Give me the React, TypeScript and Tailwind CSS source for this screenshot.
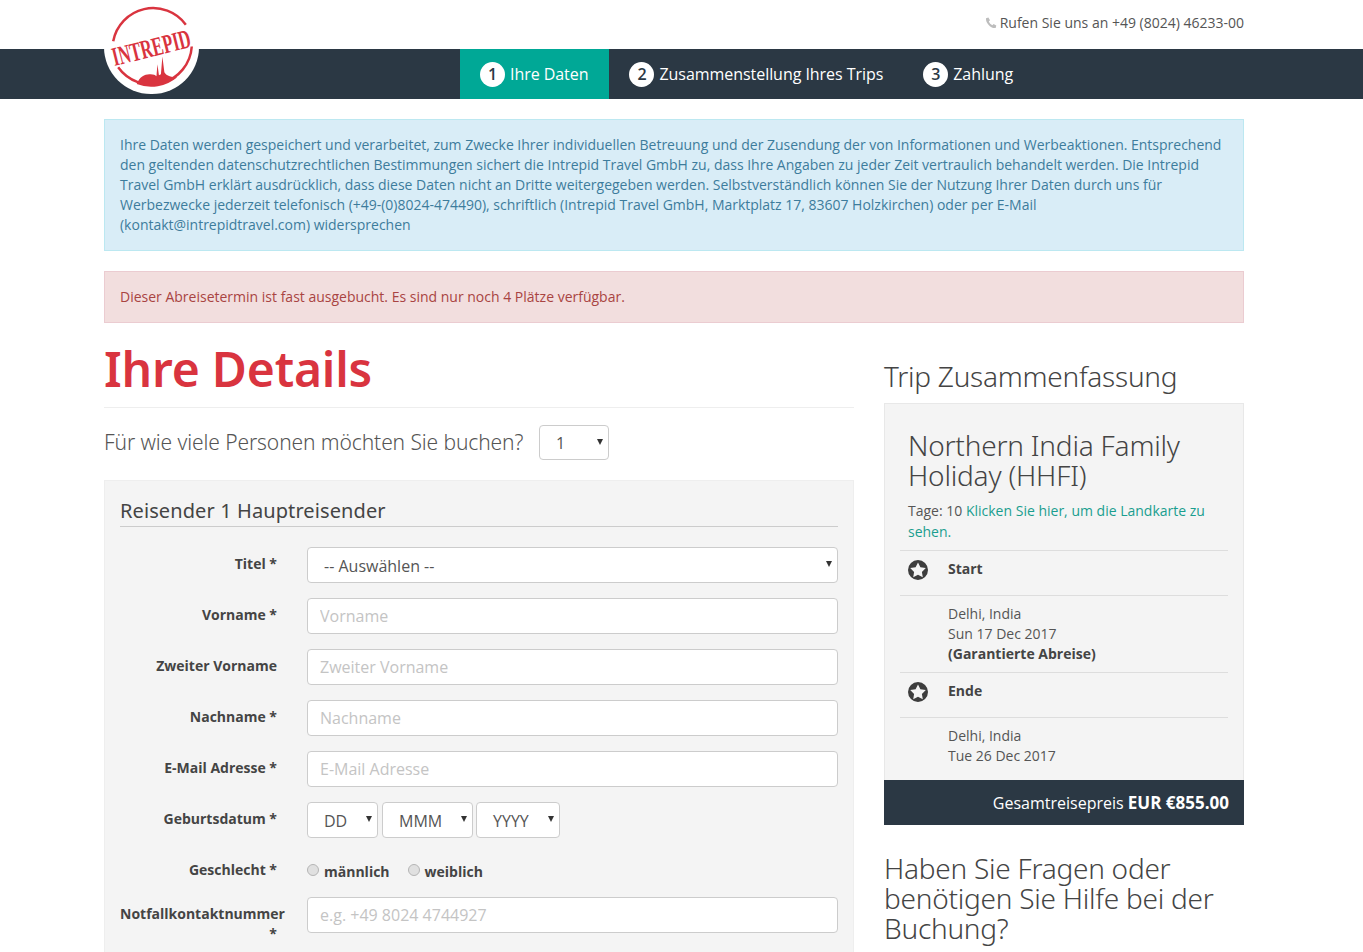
import React from "react";

const sans = "font-['Open_Sans','Noto_Sans',sans-serif]";
const head = "font-['Noto_Sans','Open_Sans',sans-serif]";

function Logo() {
  return (
    <div className="absolute left-0 top-0 w-[95px] h-[94px] rounded-full bg-white z-10">
      <svg viewBox="0 0 96 95" className="w-full h-full">
        <path d="M9.3 41.7 A41 41 0 0 1 82.7 25" fill="none" stroke="#d9343f" strokeWidth="2.5" />
        <path d="M14.3 68 A41 41 0 0 0 88.7 47" fill="none" stroke="#d9343f" strokeWidth="2.5" />
        <path d="M33 85 C36 77 42 74.5 47 75 C50 75 52 76 53 77 L54 65 L55.5 76 L57.5 75 L59 57 L61 73 C63 77 69 78 74 78 A41 41 0 0 1 33 85 Z" fill="#d9343f" />
        <text x="50" y="57" textAnchor="middle" transform="rotate(-14 50 57)" fontFamily="'Liberation Serif', serif" fontSize="27" textLength="81" lengthAdjust="spacingAndGlyphs" fill="#d9343f" fontWeight="700">INTREPID</text>
      </svg>
    </div>
  );
}

function Step({ n, label, active }: { n: string; label: string; active?: boolean }) {
  return (
    <div className={`h-full flex items-center pl-[20px] gap-[5px] text-[16px] tracking-[-0.05px] text-white ${active ? "bg-[#00a896] pr-[21px]" : "pr-[20px]"}`}>
      <span className="w-[25px] h-[25px] rounded-full bg-white text-[#2b3844] flex items-center justify-center font-semibold text-[16px]">{n}</span>
      <span>{label}</span>
    </div>
  );
}

function Sel({ children, w, cls = "" }: { children: React.ReactNode; w: string; cls?: string }) {
  return (
    <div className={`relative h-[36px] bg-white border border-[#ccc] rounded-[4px] flex items-center pl-[16px] pt-[1px] text-[16px] text-[#555] ${w} ${cls}`}>
      {children}
      <span className="absolute right-[5px] top-[13px] w-0 h-0 border-l-[3px] border-r-[3px] border-t-[6px] border-l-transparent border-r-transparent border-t-[#333]" />
    </div>
  );
}

function Input({ ph }: { ph: string }) {
  return (
    <input
      readOnly
      placeholder={ph}
      className="w-[531px] h-[36px] bg-white border border-[#ccc] rounded-[4px] px-[12px] text-[16px] placeholder:text-[#c4c4c4] outline-none"
    />
  );
}

function Row({ label, children, cls = "h-[36px]" }: { label: React.ReactNode; children: React.ReactNode; cls?: string }) {
  return (
    <div className={`flex items-start mb-[15px] ${cls}`}>
      <label className="w-[157px] mr-[30px] text-right font-bold text-[14px] leading-[20px] pt-[7px] text-[#444] shrink-0">{label}</label>
      {children}
    </div>
  );
}

function Radio({ label }: { label: string }) {
  return (
    <span className="flex items-start">
      <span className="mt-[2px] w-[12px] h-[12px] rounded-full border border-[#b5b5b5] bg-[#e0e0e0] mr-[5px]" />
      <span className="font-bold text-[14px] leading-[20px] text-[#444]">{label}</span>
    </span>
  );
}

function Star() {
  return (
    <svg viewBox="0 0 20 20" className="w-[20px] h-[20px]">
      <path
        fillRule="evenodd"
        fill="#3d3d3d"
        d="M10 0a10 10 0 1 0 0 20a10 10 0 0 0 0-20Zm0 2.4l2.4 4.9l5.4.8l-3.9 3.8l.9 5.3l-4.8-2.5l-4.8 2.5l.9-5.3l-3.9-3.8l5.4-.8Z"
      />
    </svg>
  );
}

function Stop({ label, children }: { label: string; children: React.ReactNode }) {
  return (
    <>
      <div className="border-t border-[#ddd] h-[45px] flex items-start">
        <div className="w-[48px] pl-[8px] pt-[9px] shrink-0"><Star /></div>
        <div className="font-bold text-[14px] leading-[20px] pt-[8px] text-[#444]">{label}</div>
      </div>
      <div className="border-t border-[#ddd] pl-[48px] pt-[8px] text-[14px] leading-[20px] text-[#555] pb-[8px]">{children}</div>
    </>
  );
}

export default function App() {
  return (
    <div className={`h-[952px] overflow-hidden bg-white text-[14px] ${sans}`}>
      <div className="h-[49px] bg-white">
        <div className="w-[1140px] ml-[104px] relative h-full flex justify-end items-start pt-[13px]">
          <Logo />
          <span className="flex items-center text-[14px] leading-[20px] text-[#555]">
            <svg viewBox="0 0 12 12" className="w-[12px] h-[12px] mr-[3px]">
              <path d="M1 1.2 L3.4 .6 L5 3.3 L3.8 4.5 C4.4 6 5.8 7.5 7.4 8.2 L8.6 7 L11.3 8.6 L10.7 11 C6 11.8 .4 6 1 1.2 Z" fill="#bdbdbd" />
            </svg>
            Rufen Sie uns an +49 (8024) 46233-00
          </span>
        </div>
      </div>
      <div className="h-[50px] bg-[#2b3844]">
        <div className="w-[1140px] ml-[104px] h-full pl-[356px] flex">
          <Step n="1" label="Ihre Daten" active />
          <Step n="2" label="Zusammenstellung Ihres Trips" />
          <Step n="3" label="Zahlung" />
        </div>
      </div>
      <div className="w-[1140px] ml-[104px] pt-[20px]">
        <div className="mb-[20px] border border-[#bce8f1] bg-[#d9edf7] text-[#3d7c9c] px-[15px] py-[15px] text-[14px] tracking-[-0.01px] leading-[20px]">
          Ihre Daten werden gespeichert und verarbeitet, zum Zwecke Ihrer individuellen Betreuung und der Zusendung der von Informationen und Werbeaktionen. Entsprechend den geltenden datenschutzrechtlichen Bestimmungen sichert die Intrepid Travel GmbH zu, dass Ihre Angaben zu jeder Zeit vertraulich behandelt werden. Die Intrepid Travel GmbH erklärt ausdrücklich, dass diese Daten nicht an Dritte weitergegeben werden. Selbstverständlich können Sie der Nutzung Ihrer Daten durch uns für Werbezwecke jederzeit telefonisch (+49-(0)8024-474490), schriftlich (Intrepid Travel GmbH, Marktplatz 17, 83607 Holzkirchen) oder per E-Mail (kontakt@intrepidtravel.com) widersprechen
        </div>
        <div className="border border-[#ebccd1] bg-[#f2dede] text-[#a94442] px-[15px] py-[15px] text-[14px] leading-[20px]">
          Dieser Abreisetermin ist fast ausgebucht. Es sind nur noch 4 Plätze verfügbar.
        </div>
        <div className="flex justify-between mt-[20px]">
          <div className="w-[750px]">
            <h1 className={`text-[48px] leading-[52px] font-semibold tracking-[-0.2px] text-[#d9343f] pb-[12px] border-b border-[#eee] ${head}`}>Ihre Details</h1>
            <div className="flex items-center mt-[17px] mb-[20px]">
              <span className={`w-[420px] whitespace-nowrap text-[21px] leading-[35px] tracking-[-0.1px] font-light text-[#555] mr-[15px] ${head}`}>Für wie viele Personen möchten Sie buchen?</span>
              <Sel w="w-[70px]" cls="!h-[35px]">1</Sel>
            </div>
            <div className="bg-[#f4f4f4] border border-[#eee] pt-[15px] px-[15px] h-[600px]">
              <h3 className={`text-[20px] leading-[30px] tracking-[0.1px] text-[#444] border-b border-[#ccc] mb-[20px] ${head}`}>Reisender 1 Hauptreisender</h3>
              <Row label="Titel *"><Sel w="w-[531px]">-- Auswählen --</Sel></Row>
              <Row label="Vorname *"><Input ph="Vorname" /></Row>
              <Row label="Zweiter Vorname"><Input ph="Zweiter Vorname" /></Row>
              <Row label="Nachname *"><Input ph="Nachname" /></Row>
              <Row label="E-Mail Adresse *"><Input ph="E-Mail Adresse" /></Row>
              <Row label="Geburtsdatum *">
                <div className="flex">
                  <Sel w="w-[71px]">DD</Sel>
                  <Sel w="w-[91px]" cls="ml-[4px]">MMM</Sel>
                  <Sel w="w-[84px]" cls="ml-[3px]">YYYY</Sel>
                </div>
              </Row>
              <Row label="Geschlecht *" cls="h-[29px]">
                <div className="flex gap-[18px] pt-[9px]">
                  <Radio label="männlich" />
                  <Radio label="weiblich" />
                </div>
              </Row>
              <Row label={<>Notfallkontaktnummer *</>}><Input ph="e.g. +49 8024 4744927" /></Row>
            </div>
          </div>
          <div className="w-[360px] pt-[13px]">
            <h2 className={`text-[28px] leading-[40px] tracking-[-0.25px] font-light text-[#444] mb-[7px] ${head}`}>Trip Zusammenfassung</h2>
            <div className="bg-[#f4f4f4] border border-[#e8e8e8]">
              <div className="px-[15px] pt-[26px]">
                <h3 className={`pl-[8px] pr-[9px] text-[28px] leading-[30px] tracking-[-0.2px] font-light text-[#444] ${head}`}>Northern India Family Holiday (HHFI)</h3>
                <p className="px-[8px] mt-[10px] mb-[8px] text-[14px] leading-[21px] text-[#555]">
                  Tage: 10 <span className="text-[#1a9e8f]">Klicken Sie hier, um die Landkarte zu sehen.</span>
                </p>
                <Stop label="Start">Delhi, India<br />Sun 17 Dec 2017<br /><b className="text-[#444]">(Garantierte Abreise)</b></Stop>
                <Stop label="Ende">Delhi, India<br />Tue 26 Dec 2017</Stop>
              </div>
              <div className="h-[45px] -mx-[1px] -mb-[1px] bg-[#2b3844] text-white flex items-center justify-end pr-[15px] text-[16px] mt-[6px]">
                Gesamtreisepreis&nbsp;<b className="text-[17px]">EUR €855.00</b>
              </div>
            </div>
            <h2 className={`mt-[28px] text-[28px] leading-[30px] tracking-[-0.25px] font-light text-[#444] ${head}`}>Haben Sie Fragen oder benötigen Sie Hilfe bei der Buchung?</h2>
          </div>
        </div>
      </div>
    </div>
  );
}
